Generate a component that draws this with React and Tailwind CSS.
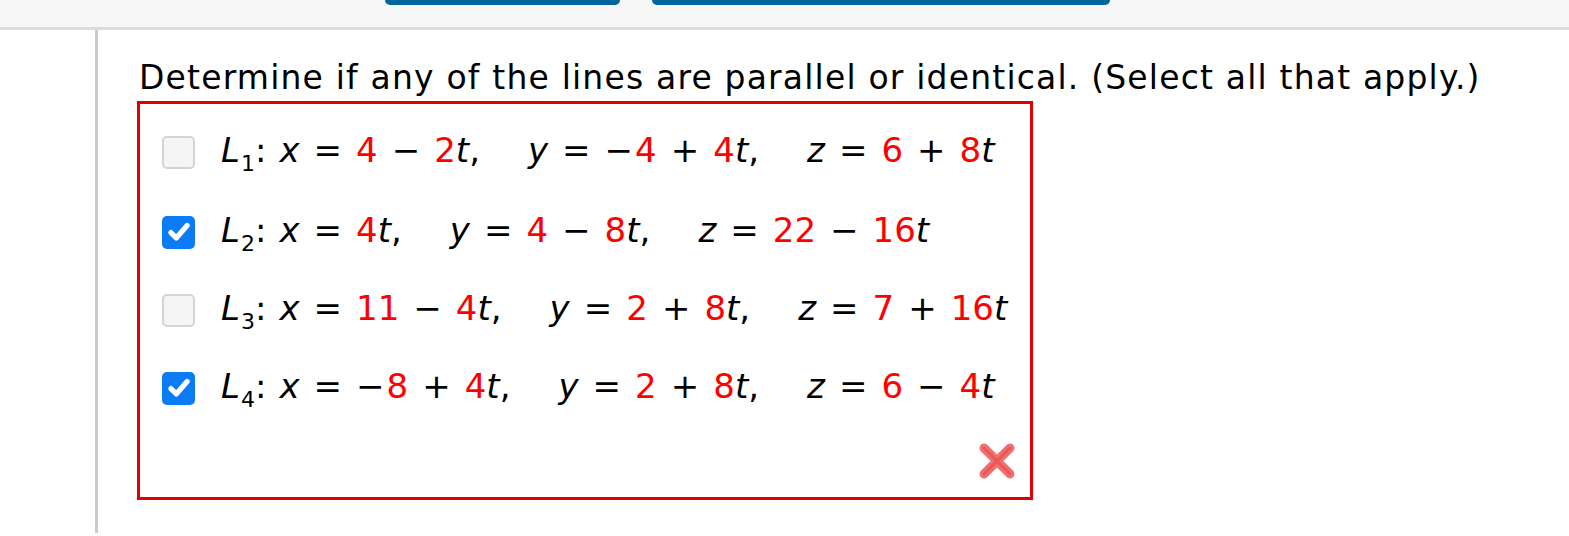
const V = ({ children }) => <i>{children}</i>;
const N = ({ children }) => <span className="text-[#ff0000]">{children}</span>;
const Op = ({ children }) => <span className="inline-block mx-[14px]">{children}</span>;
const Neg = () => <span className="inline-block mr-[2px]">−</span>;
const Comma = () => <span>,</span>;
const Gap = () => <span className="inline-block w-[48px]" />;

const rows = [
  {
    n: '1',
    checked: false,
    body: (
      <>
        <V>x</V><Op>=</Op><N>4</N><Op>−</Op><N>2</N><V>t</V><Comma />
        <Gap />
        <V>y</V><Op>=</Op><Neg /><N>4</N><Op>+</Op><N>4</N><V>t</V><Comma />
        <Gap />
        <V>z</V><Op>=</Op><N>6</N><Op>+</Op><N>8</N><V>t</V>
      </>
    ),
  },
  {
    n: '2',
    checked: true,
    body: (
      <>
        <V>x</V><Op>=</Op><N>4</N><V>t</V><Comma />
        <Gap />
        <V>y</V><Op>=</Op><N>4</N><Op>−</Op><N>8</N><V>t</V><Comma />
        <Gap />
        <V>z</V><Op>=</Op><N>22</N><Op>−</Op><N>16</N><V>t</V>
      </>
    ),
  },
  {
    n: '3',
    checked: false,
    body: (
      <>
        <V>x</V><Op>=</Op><N>11</N><Op>−</Op><N>4</N><V>t</V><Comma />
        <Gap />
        <V>y</V><Op>=</Op><N>2</N><Op>+</Op><N>8</N><V>t</V><Comma />
        <Gap />
        <V>z</V><Op>=</Op><N>7</N><Op>+</Op><N>16</N><V>t</V>
      </>
    ),
  },
  {
    n: '4',
    checked: true,
    body: (
      <>
        <V>x</V><Op>=</Op><Neg /><N>8</N><Op>+</Op><N>4</N><V>t</V><Comma />
        <Gap />
        <V>y</V><Op>=</Op><N>2</N><Op>+</Op><N>8</N><V>t</V><Comma />
        <Gap />
        <V>z</V><Op>=</Op><N>6</N><Op>−</Op><N>4</N><V>t</V>
      </>
    ),
  },
];

export default function App() {
  return (
    <div className="w-[1569px] h-[536px] bg-white overflow-hidden font-['DejaVu_Sans',sans-serif] text-black">
      {/* top toolbar */}
      <div className="h-[30px] bg-[#f7f7f7] border-b-[3px] border-[#dddddd] flex">
        <div className="ml-[385px] w-[235px] h-[5px] bg-[#00659c] rounded-b-[8px]" />
        <div className="ml-[32px] w-[458px] h-[5px] bg-[#00659c] rounded-b-[8px]" />
      </div>

      <div className="flex">
        <div className="ml-[95px] w-[3px] h-[503px] bg-[#cccccc]" />
        <div className="pl-[39px] pt-[28px]">
          <p className="text-[33px] leading-[40px] tracking-[1.18px] whitespace-nowrap pl-[2px]">
            Determine if any of the lines are parallel or identical. (Select all that apply.)
          </p>
          <div className="mt-[3px] w-[896px] h-[399px] border-[3px] border-[#e00000] pt-[8px] pl-[22px] relative">
            {rows.map((l, idx) => (
              <div key={l.n} className={`flex items-center ${idx === 0 ? 'h-[81px]' : 'h-[78px]'}`}>
                <div
                  className={
                    l.checked
                      ? 'w-[33px] h-[33px] rounded-[5px] bg-[#0b7cf5] flex items-center justify-center'
                      : 'w-[33px] h-[33px] rounded-[5px] bg-[#f5f5f5] border-2 border-[#d4d4d4]'
                  }
                >
                  {l.checked && (
                    <svg width="26" height="26" viewBox="0 0 24 24">
                      <path d="M4.5 12.5 L9.5 17.5 L19.5 6" fill="none" stroke="white" strokeWidth="4.8" strokeLinecap="round" strokeLinejoin="round" />
                    </svg>
                  )}
                </div>
                <div className="ml-[26px] text-[34px] leading-[40px] whitespace-nowrap">
                  <V>L</V>
                  <span className="text-[22px] relative top-[9px] ml-[1px]">{l.n}</span>
                  <span className="mr-[13px]">:</span>
                  {l.body}
                </div>
              </div>
            ))}
            <div className="absolute right-[14px] bottom-[17px]">
              <svg width="38" height="38" viewBox="0 0 38 38">
                <path d="M6 6 L32 32 M32 6 L6 32" stroke="#f07070" strokeWidth="9" strokeLinecap="round" />
                <path d="M6 6 L32 32 M32 6 L6 32" stroke="#e84848" strokeWidth="3" strokeLinecap="round" opacity="0.6" />
              </svg>
            </div>
          </div>
        </div>
      </div>
    </div>
  );
}
